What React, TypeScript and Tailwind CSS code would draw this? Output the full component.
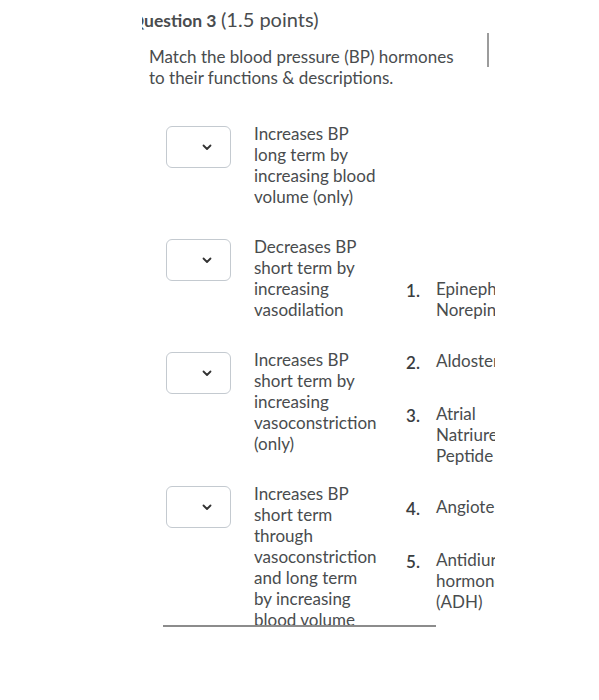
const rows = [
  ["Increases BP", "long term by", "increasing blood", "volume (only)"],
  ["Decreases BP", "short term by", "increasing", "vasodilation"],
  ["Increases BP", "short term by", "increasing", "vasoconstriction", "(only)"],
  [
    "Increases BP",
    "short term",
    "through",
    "vasoconstriction",
    "and long term",
    "by increasing",
    "blood volume",
  ],
];

const hormones = [
  ["Epinephrine/", "Norepinephrine"],
  ["Aldosterone"],
  ["Atrial", "Natriuretic", "Peptide"],
  ["Angiotensin II"],
  ["Antidiuretic", "hormone", "(ADH)"],
];

function SelectBox() {
  return (
    <div className="mt-[3px] flex h-[42px] w-[65px] shrink-0 items-center justify-end rounded-[6px] border border-[#c4cad0] bg-white pr-[18px]">
      <svg width="10" height="7" viewBox="0 0 10 7" fill="none">
        <path d="M1.5 1.5L5 5L8.5 1.5" stroke="#333" strokeWidth="1.8" strokeLinecap="round" strokeLinejoin="round" />
      </svg>
    </div>
  );
}

export default function App() {
  return (
    <div className="h-[700px] w-[599px] overflow-hidden bg-white font-['Lato','Noto_Sans',sans-serif] text-[#494c4e]">
      <div className="pl-[142px] pt-[8px]">
        <div className="w-[360px] overflow-hidden">
          <h2 className="-ml-[12px] whitespace-nowrap text-[17.5px] leading-[22px]">
            <span className="font-bold">Question 3</span> <span className="text-[20px]">(1.5 points)</span>
          </h2>
        </div>
        <div className="mt-[14px] flex">
          <p className="ml-[7px] w-[338px] text-[17px] leading-[21px]">
            Match the blood pressure (BP) hormones
            <br />
            to their functions &amp; descriptions.
          </p>
          <div className="mt-[-13px] h-[34px] w-[2px] bg-[#9c9c9c]" />
        </div>

        <div className="ml-[21px] mt-[34px] w-[332px]">
          <div className="flex h-[503px] overflow-hidden">
            <div className="flex w-[240px] shrink-0 flex-col gap-[29px] pl-[3px] pt-[1px]">
              {rows.map((r, i) => (
                <div key={i} className="flex gap-[23px]">
                  <SelectBox />
                  <p className="whitespace-nowrap text-[17px] leading-[21px]">
                    {r.map((l, j) => (
                      <span key={j} className="block">
                        {l}
                      </span>
                    ))}
                  </p>
                </div>
              ))}
            </div>
            <ol className="flex flex-col gap-[30px] pt-[156px]">
              {hormones.map((h, i) => (
                <li key={i} className="flex">
                  <span className="w-[33px] shrink-0 pl-[3px] pt-[2px] text-[17px] font-semibold leading-[21px] text-[#3a3d3f]">
                    {i + 1}.
                  </span>
                  <span className="whitespace-nowrap text-[17px] leading-[21px]">
                    {h.map((l, j) => (
                      <span key={j} className="block">
                        {l}
                      </span>
                    ))}
                  </span>
                </li>
              ))}
            </ol>
          </div>
          <div className="h-[2px] w-[273px] bg-[#8c8c8c]" />
        </div>
      </div>
    </div>
  );
}
